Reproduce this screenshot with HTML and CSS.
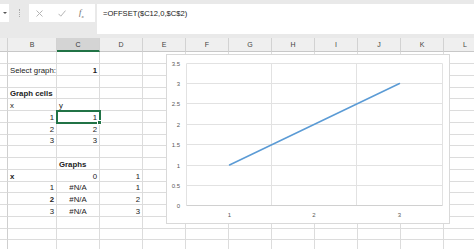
FILE: index.html
```html
<!DOCTYPE html>
<html lang="en">
<head>
    <meta charset="UTF-8">
    <title>OFFSET graph</title>
    <link rel="stylesheet" href="styles.css">
</head>
<body>

    <!-- formula bar -->
    <div class="toolbar">
        <div class="namebox"><span class="caret"></span></div>
        <div class="grip"></div>
        <div class="fbuttons">
            <svg class="icon cancel" width="7" height="7" viewBox="0 0 7 7"><path d="M0.5 0.5 L6.5 6.5 M6.5 0.5 L0.5 6.5"/></svg>
            <svg class="icon enter" width="8" height="7" viewBox="0 0 8 7"><path d="M0.5 3.8 L2.8 6.2 L7.5 0.6"/></svg>
            <span class="fx">f<sub>x</sub></span>
        </div>
        <div class="formula">=OFFSET($C12,0,$C$2)</div>
    </div>

    <div class="sheet">
        <table class="grid">
            <colgroup>
                <col class="c-hd"><col class="c-b"><col class="c-n"><col class="c-n"><col class="c-n"><col class="c-n">
                <col class="c-n"><col class="c-n"><col class="c-n"><col class="c-n"><col class="c-n"><col class="c-n">
            </colgroup>
            <tr class="head">
                <td></td><td>B</td><td class="active">C</td><td>D</td><td>E</td><td>F</td><td>G</td><td>H</td><td>I</td><td>J</td><td>K</td><td>L</td>
            </tr>
            <tr><td></td><td></td><td></td><td></td><td></td><td></td><td></td><td></td><td></td><td></td><td></td><td></td></tr>
            <tr><td></td><td>Select graph:</td><td class="num b">1</td><td></td><td></td><td></td><td></td><td></td><td></td><td></td><td></td><td></td></tr>
            <tr><td></td><td></td><td></td><td></td><td></td><td></td><td></td><td></td><td></td><td></td><td></td><td></td></tr>
            <tr class="short"><td></td><td class="b">Graph cells</td><td></td><td></td><td></td><td></td><td></td><td></td><td></td><td></td><td></td><td></td></tr>
            <tr><td></td><td>x</td><td>y</td><td></td><td></td><td></td><td></td><td></td><td></td><td></td><td></td><td></td></tr>
            <tr><td></td><td class="num">1</td><td class="num sel">1</td><td></td><td></td><td></td><td></td><td></td><td></td><td></td><td></td><td></td></tr>
            <tr><td></td><td class="num">2</td><td class="num">2</td><td></td><td></td><td></td><td></td><td></td><td></td><td></td><td></td><td></td></tr>
            <tr class="short"><td></td><td class="num">3</td><td class="num">3</td><td></td><td></td><td></td><td></td><td></td><td></td><td></td><td></td><td></td></tr>
            <tr><td></td><td></td><td></td><td></td><td></td><td></td><td></td><td></td><td></td><td></td><td></td><td></td></tr>
            <tr><td></td><td></td><td class="b">Graphs</td><td></td><td></td><td></td><td></td><td></td><td></td><td></td><td></td><td></td></tr>
            <tr><td></td><td class="b">x</td><td class="num">0</td><td class="num">1</td><td></td><td></td><td></td><td></td><td></td><td></td><td></td><td></td></tr>
            <tr class="short"><td></td><td class="num">1</td><td class="mid">#N/A</td><td class="num">1</td><td></td><td></td><td></td><td></td><td></td><td></td><td></td><td></td></tr>
            <tr><td></td><td class="num b">2</td><td class="mid">#N/A</td><td class="num">2</td><td></td><td></td><td></td><td></td><td></td><td></td><td></td><td></td></tr>
            <tr><td></td><td class="num">3</td><td class="mid">#N/A</td><td class="num">3</td><td></td><td></td><td></td><td></td><td></td><td></td><td></td><td></td></tr>
            <tr><td></td><td></td><td></td><td></td><td></td><td></td><td></td><td></td><td></td><td></td><td></td><td></td></tr>
            <tr class="short"><td></td><td></td><td></td><td></td><td></td><td></td><td></td><td></td><td></td><td></td><td></td><td></td></tr>
            <tr><td></td><td></td><td></td><td></td><td></td><td></td><td></td><td></td><td></td><td></td><td></td><td></td></tr>
        </table>

        <!-- embedded line chart, floats over the cells -->
        <div class="chart">
            <svg width="284" height="170" viewBox="0 0 284 170">
                <rect class="frame" x="0.5" y="0.5" width="283" height="169"/>
                <g class="gridlines">
                    <path d="M20.5 9.5 H276.5 M20.5 29.5 H276.5 M20.5 49.5 H276.5 M20.5 70.5 H276.5 M20.5 90.5 H276.5 M20.5 111.5 H276.5 M20.5 131.5 H276.5"/>
                    <path d="M20.5 9.5 V151.5 M105.5 9.5 V151.5 M190.5 9.5 V151.5 M276.5 9.5 V151.5"/>
                </g>
                <path class="axis" d="M20.5 151.5 H276.5"/>
                <g class="tick yt">
                    <text x="14" y="11.5">3.5</text>
                    <text x="14" y="31.5">3</text>
                    <text x="14" y="51.5">2.5</text>
                    <text x="14" y="72.5">2</text>
                    <text x="14" y="92.5">1.5</text>
                    <text x="14" y="113.5">1</text>
                    <text x="14" y="133.5">0.5</text>
                    <text x="14" y="153.5">0</text>
                </g>
                <g class="tick xt">
                    <text x="63.5" y="163">1</text>
                    <text x="148" y="163">2</text>
                    <text x="233.5" y="163">3</text>
                </g>
                <path class="series" d="M63.5 111 L233.5 29.5"/>
            </svg>
        </div>
    </div>

</body>
</html>
```

FILE: styles.css
```css
body {
    margin: 0;
    font-family: "Liberation Sans", Arial, sans-serif;
    background-color: #ffffff;
    overflow: hidden;
}

/* formula bar */
.toolbar {
    display: flex;
    align-items: flex-start;
    height: 38px;
    padding-top: 4px;
    box-sizing: border-box;
    background-color: #e9e9e9;
}

.namebox {
    display: flex;
    align-items: center;
    justify-content: flex-end;
    width: 9px;
    height: 18px;
    padding-right: 2px;
    box-sizing: border-box;
    background-color: #fff;
}

.caret {
    width: 0;
    height: 0;
    border-left: 2px solid transparent;
    border-right: 2px solid transparent;
    border-top: 2px solid #555;
}

.grip {
    width: 0;
    height: 8px;
    margin: 5px 0 0 10px;
    border-left: 1px dotted #aaa;
}

.fbuttons {
    display: flex;
    align-items: center;
    width: 66px;
    height: 18px;
    margin-left: 9px;
    background-color: #fff;
}

.icon {
    fill: none;
    stroke: #b4b4b4;
    stroke-width: 1;
}

.cancel {
    margin-left: 7px;
}

.enter {
    margin-left: 15px;
}

.fx {
    margin-left: 13px;
    font-family: "Liberation Serif", serif;
    font-style: italic;
    font-size: 8.5px;
    color: #666;
}

.fx sub {
    font-size: 5px;
}

.formula {
    flex: 1;
    height: 30px;
    margin-left: 2px;
    padding: 0 6px;
    background-color: #fff;
    font-size: 7.6px;
    line-height: 20px;
    color: #222;
    white-space: nowrap;
}

/* cells */
.sheet {
    position: relative;
}

.grid {
    border-collapse: separate;
    border-spacing: 0;
    table-layout: fixed;
    width: 484px;
    font-size: 7.8px;
    color: #222;
}

.c-hd { width: 8px; }
.c-b { width: 49px; }
.c-n { width: 43px; }

.grid tr {
    height: 12px;
}

.grid tr.short {
    height: 11px;
}

.grid td {
    padding: 0 2px;
    border-right: 1px solid #dcdcdc;
    border-bottom: 1px solid #dcdcdc;
    line-height: 9px;
    vertical-align: bottom;
    white-space: nowrap;
    overflow: hidden;
}

.grid td:first-child {
    padding: 0;
    background-color: #fff;
    border-right-color: #cfcfcf;
}

.grid .head {
    height: 14px;
}

.grid .head td {
    background-color: #efefef;
    color: #444;
    font-size: 7px;
    text-align: center;
    vertical-align: middle;
    border-right-color: #d2d2d2;
    border-bottom: 1px solid #c8c8c8;
}

.grid .head td.active {
    background-color: #d4d4d4;
    border-bottom: 2px solid #217346;
    color: #333;
}

.num { text-align: right; }
.mid { text-align: center; }
.b { font-weight: bold; }

.sel {
    position: relative;
    outline: 2px solid #217346;
    outline-offset: -1px;
    overflow: visible !important;
}

.sel::after {
    content: "";
    position: absolute;
    right: -3px;
    bottom: -3px;
    width: 3px;
    height: 3px;
    background-color: #217346;
    border: 1px solid #fff;
}

/* chart */
.chart {
    position: absolute;
    left: 166px;
    top: 16px;
    width: 284px;
    height: 170px;
    background-color: #fff;
}

.chart svg {
    display: block;
}

.frame {
    fill: #fff;
    stroke: #d9d9d9;
}

.gridlines path {
    fill: none;
    stroke: #e2e2e2;
}

.axis {
    stroke: #d0d0d0;
}

.tick text {
    font-family: "Liberation Sans", Arial, sans-serif;
    font-size: 6px;
    fill: #595959;
}

.yt text {
    text-anchor: end;
}

.xt text {
    text-anchor: middle;
}

.series {
    fill: none;
    stroke: #5b9bd5;
    stroke-width: 1.5;
    stroke-linecap: round;
}
```
